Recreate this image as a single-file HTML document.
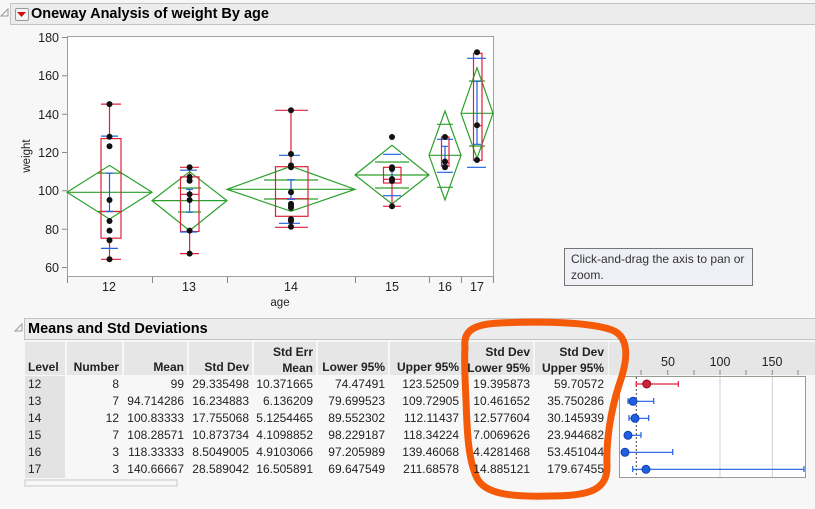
<!DOCTYPE html>
<html><head><meta charset="utf-8"><style>
body{margin:0;width:815px;height:509px;background:#f7f7f7;font-family:"Liberation Sans",sans-serif;position:relative;overflow:hidden}
.hdr{position:absolute;left:10px;right:-2px;height:20px;background:#ececec;border:1px solid #c3c3c3;font-weight:bold;font-size:14.5px;line-height:20px}
.t{position:absolute;font-size:12px;color:#222;white-space:nowrap}
.h{font-weight:bold}
.r{text-align:right}
</style></head><body>
<div class="hdr" style="top:3px"><span style="position:absolute;left:4px;top:4px;width:12px;height:11px;border:1px solid #999;border-radius:2px;background:#f3f3f3"></span><svg style="position:absolute;left:6px;top:8px" width="10" height="6"><path d="M0 0H9L4.5 5Z" fill="#d01010"/></svg><span style="position:absolute;left:20px">Oneway Analysis of weight By age</span></div>
<svg style="position:absolute;left:0;top:8px" width="10" height="10"><path d="M1 8L8 1V8Z" fill="none" stroke="#999"/></svg>
<div class="hdr" style="top:318px;left:24px"><span style="position:absolute;left:3px">Means and Std Deviations</span></div>
<svg style="position:absolute;left:14px;top:323px" width="10" height="10"><path d="M1 8L8 1V8Z" fill="none" stroke="#999"/></svg>

<svg style="position:absolute;left:0;top:0" width="815" height="509">
<rect x="67.5" y="36.5" width="426" height="240" fill="#fff" stroke="#a0a0a0"/>
<g font-size="12.5" fill="#222" text-anchor="end" font-family="Liberation Sans">
<text x="59" y="42">180</text><text x="59" y="80">160</text><text x="59" y="119">140</text><text x="59" y="157">120</text><text x="59" y="195">100</text><text x="59" y="234">80</text><text x="59" y="272">60</text></g>
<g stroke="#888"><path d="M62 37.5H67M62 75.8H67M62 114.2H67M62 152.5H67M62 190.8H67M62 229.2H67M62 267.5H67"/>
<path d="M67.5 277V283M152.5 277V283M227.5 277V283M355.5 277V283M429.5 277V283M461.5 277V283M493.5 277V283"/></g>
<g font-size="12.5" fill="#222" text-anchor="middle" font-family="Liberation Sans">
<text x="109" y="291">12</text><text x="189" y="291">13</text><text x="291" y="291">14</text><text x="392" y="291">15</text><text x="445" y="291">16</text><text x="477" y="291">17</text>
<text x="280" y="306" font-size="11.5">age</text>
<text transform="translate(30,156) rotate(-90)" font-size="11.5">weight</text></g>
<g fill="none" stroke="#2aa02a" stroke-width="1.2">
<path d="M67 192.3L109.5 165.4L152 192.3L109.5 219.1Z M67 192.3H152 M97 173.1H122 M97 211.5H122"/>
<path d="M152 200.6L189.6 171.7L227 200.6L189.6 230.6Z M152 200.6H227 M178 188H201 M178 212H201"/>
<path d="M227 189.3L291 166.3L355 189.3L291 211.3Z M227 189.3H355 M264 180H318 M264 199H318"/>
<path d="M355 175L392 145.3L429 175L392 204Z M355 175H429 M375 162H409 M375 188H409"/>
<path d="M429 155.3L445 111L461 155.3L445 200Z M429 155.3H461 M437 124.3H453 M437 187.3H453"/>
<path d="M461 113.3L477 67.7L493 113.3L477 158.3Z M461 113.3H493 M469 81H485 M469 146H485"/>
</g>
<g fill="none" stroke="#e0203a" stroke-width="1.2">
<rect x="101" y="138.6" width="20" height="99.6"/><path d="M101 211.5H121M109.5 104.1V138.6M109.5 238.2V259.3M101 104.1H121M101 259.3H121"/>
<rect x="180.5" y="176.9" width="18.5" height="54.6"/><path d="M180 194.3H199M189.6 167.3V176.9M189.6 231.5V253.6M180 167.3H199M180 253.6H199"/>
<rect x="275.5" y="166.7" width="32.5" height="49.6"/><path d="M275 198.7H308M291 110.3V166.7M291 216.3V227.3M275 110.3H308M275 227.3H308"/>
<rect x="383.5" y="167.3" width="17.5" height="15.7"/><path d="M383 179.3H401M392 183V206.3M383 206.3H401"/>
<rect x="441.5" y="137" width="7.5" height="29.3"/><path d="M441 162.7H449"/>
<rect x="473.5" y="53.3" width="8.5" height="107"/><path d="M473 125.7H482"/>
</g>
<g fill="none" stroke="#1f5fe0" stroke-width="1.2">
<path d="M101 136.1H118M101 248.4H118M109.5 173.1V211.5M106 173.1H113M106 211.5H113"/>
<path d="M180 170.2H197M180 232H197M189.6 189.3V212.3M186 189.3H193M186 212.3H193"/>
<path d="M279 155.3H300M279 223.3H300M291 179.7V199.3M287 179.7H295M287 199.3H295"/>
<path d="M383 154.3H401M383 195.7H401M392 170V182"/>
<path d="M437 139.3H453M437 172.3H453M445 146.3V165M442 146.3H448M442 165H448"/>
<path d="M467 58.3H486M467 167.3H486M477 81.3V144.3M473 81.3H481M473 144.3H481"/>
</g>
<g fill="#111">
<circle cx="109.5" cy="259.3" r="3"/><circle cx="109.5" cy="240.2" r="3"/><circle cx="109.5" cy="230.6" r="3"/><circle cx="109.5" cy="221" r="3"/><circle cx="109.5" cy="200" r="3"/><circle cx="109.5" cy="146.2" r="3"/><circle cx="109.5" cy="136.7" r="3"/><circle cx="109.5" cy="104.1" r="3"/>
<circle cx="189.6" cy="253.6" r="3"/><circle cx="189.6" cy="230.6" r="3"/><circle cx="189.6" cy="200" r="3"/><circle cx="189.6" cy="194.3" r="3"/><circle cx="189.6" cy="180.8" r="3"/><circle cx="189.6" cy="176.9" r="3"/><circle cx="189.6" cy="167.3" r="3"/>
<circle cx="291" cy="110.3" r="3"/><circle cx="291" cy="154" r="3"/><circle cx="291" cy="165.4" r="3"/><circle cx="291" cy="167.3" r="3"/><circle cx="291" cy="192.3" r="3"/><circle cx="291" cy="203.9" r="3"/><circle cx="291" cy="205.8" r="3"/><circle cx="291" cy="207.7" r="3"/><circle cx="291" cy="219.1" r="3"/><circle cx="291" cy="221" r="3"/><circle cx="291" cy="226.7" r="3"/>
<circle cx="392" cy="137" r="3"/><circle cx="392" cy="167.3" r="3"/><circle cx="392" cy="169" r="3"/><circle cx="392" cy="179" r="3"/><circle cx="392" cy="181" r="3"/><circle cx="392" cy="206.3" r="3"/>
<circle cx="445" cy="137" r="3"/><circle cx="445" cy="161.5" r="3"/><circle cx="445" cy="167.3" r="3"/>
<circle cx="477" cy="52.3" r="3"/><circle cx="477" cy="125.2" r="3"/><circle cx="477" cy="160" r="3"/>
</g>

<rect x="25" y="342" width="583" height="33" fill="#e6e6e6"/>
<rect x="25" y="376" width="40" height="102" fill="#e3e3e3"/>
<g stroke="#f7f7f7" stroke-width="2"><path d="M66 342V375M123 342V375M188 342V375M253 342V375M317 342V375M389 342V375M467 342V375M534 342V375"/></g>
<rect x="25" y="480" width="152" height="6" fill="none" stroke="#c8c8c8"/>

<rect x="609" y="342" width="206" height="33" fill="#e6e6e6"/>
<rect x="619.5" y="376.5" width="186" height="101" fill="#fff" stroke="#9a9a90"/>
<g stroke="#d0d0d0"><path d="M720 377V477M772.3 377V477"/></g>
<path d="M636.3 377V477" stroke="#444" stroke-dasharray="2,2"/>
<g stroke="#888"><path d="M641 370V375M667.7 370V375M694 370V375M720 370V375M746 370V375M772.3 370V375M798 370V375"/></g>
<g font-size="12.5" fill="#222" text-anchor="middle" font-family="Liberation Sans"><text x="668" y="366">50</text><text x="720" y="366">100</text><text x="772" y="366">150</text></g>
<g stroke-width="1.2" fill="none">
<path d="M636.3 384H678.3M636.3 381V387M678.3 381V387" stroke="#e0203a"/>
<path d="M628 401.3H653.7M628 398V404M653.7 398V404M629 418.3H648.7M629 415V421M648.7 415V421M626 435.3H641M641 432V438M624 452.3H672.7M672.7 449V455M632.7 469.3H804M632.7 466V472M804 466V472" stroke="#1f5fe0"/>
</g>
<circle cx="646.7" cy="384" r="4" fill="#d0203a" stroke="#901020"/>
<g fill="#1f5fe0" stroke="#1040b0"><circle cx="633" cy="401.3" r="4"/><circle cx="635" cy="418.3" r="4"/><circle cx="628" cy="435.3" r="4"/><circle cx="625" cy="452.3" r="4"/><circle cx="646" cy="469.3" r="4"/></g>

<path d="M465 347C463 330 475 324 500 323C540 321 590 322 612 330C630 337 628 360 619 385C611 410 606 440 607 465C608 490 590 496 550 496C515 497 485 495 477 478C468 460 467 430 466 400C465 380 464 360 465 347Z" fill="none" stroke="#f45a08" stroke-width="7" stroke-linejoin="round"/>
</svg>

<div style="position:absolute;left:564px;top:248px;width:181px;height:34px;background:#eff0f5;border:1px solid #777;font-size:12px;color:#333;padding:2px 0 0 6px;line-height:16px">Click-and-drag the axis to pan or zoom.</div>

<div class="t h" style="left:28px;top:360px">Level</div>
<div class="t h r" style="left:66px;width:53px;top:360px">Number</div>
<div class="t h r" style="left:124px;width:60px;top:360px">Mean</div>
<div class="t h r" style="left:189px;width:60px;top:360px">Std Dev</div>
<div class="t h r" style="left:254px;width:59px;top:344px;line-height:16px">Std Err<br>Mean</div>
<div class="t h r" style="left:318px;width:67px;top:360px">Lower 95%</div>
<div class="t h r" style="left:390px;width:69px;top:360px">Upper 95%</div>
<div class="t h r" style="left:458px;width:72px;top:344px;line-height:16px">Std Dev<br>Lower 95%</div>
<div class="t h r" style="left:535px;width:69px;top:344px;line-height:16px">Std Dev<br>Upper 95%</div>

<div class="t" style="left:28px;top:376px;line-height:17px">12<br>13<br>14<br>15<br>16<br>17</div>
<div class="t r" style="left:66px;width:53px;top:376px;line-height:17px">8<br>7<br>12<br>7<br>3<br>3</div>
<div class="t r" style="left:120px;width:64px;top:376px;line-height:17px">99<br>94.714286<br>100.83333<br>108.28571<br>118.33333<br>140.66667</div>
<div class="t r" style="left:185px;width:64px;top:376px;line-height:17px">29.335498<br>16.234883<br>17.755068<br>10.873734<br>8.5049005<br>28.589042</div>
<div class="t r" style="left:250px;width:63px;top:376px;line-height:17px">10.371665<br>6.136209<br>5.1254465<br>4.1098852<br>4.9103066<br>16.505891</div>
<div class="t r" style="left:318px;width:67px;top:376px;line-height:17px">74.47491<br>79.699523<br>89.552302<br>98.229187<br>97.205989<br>69.647549</div>
<div class="t r" style="left:390px;width:69px;top:376px;line-height:17px">123.52509<br>109.72905<br>112.11437<br>118.34224<br>139.46068<br>211.68578</div>
<div class="t r" style="left:458px;width:72px;top:376px;line-height:17px">19.395873<br>10.461652<br>12.577604<br>7.0069626<br>4.4281468<br>14.885121</div>
<div class="t r" style="left:535px;width:69px;top:376px;line-height:17px">59.70572<br>35.750286<br>30.145939<br>23.944682<br>53.451044<br>179.67455</div>
</body></html>
